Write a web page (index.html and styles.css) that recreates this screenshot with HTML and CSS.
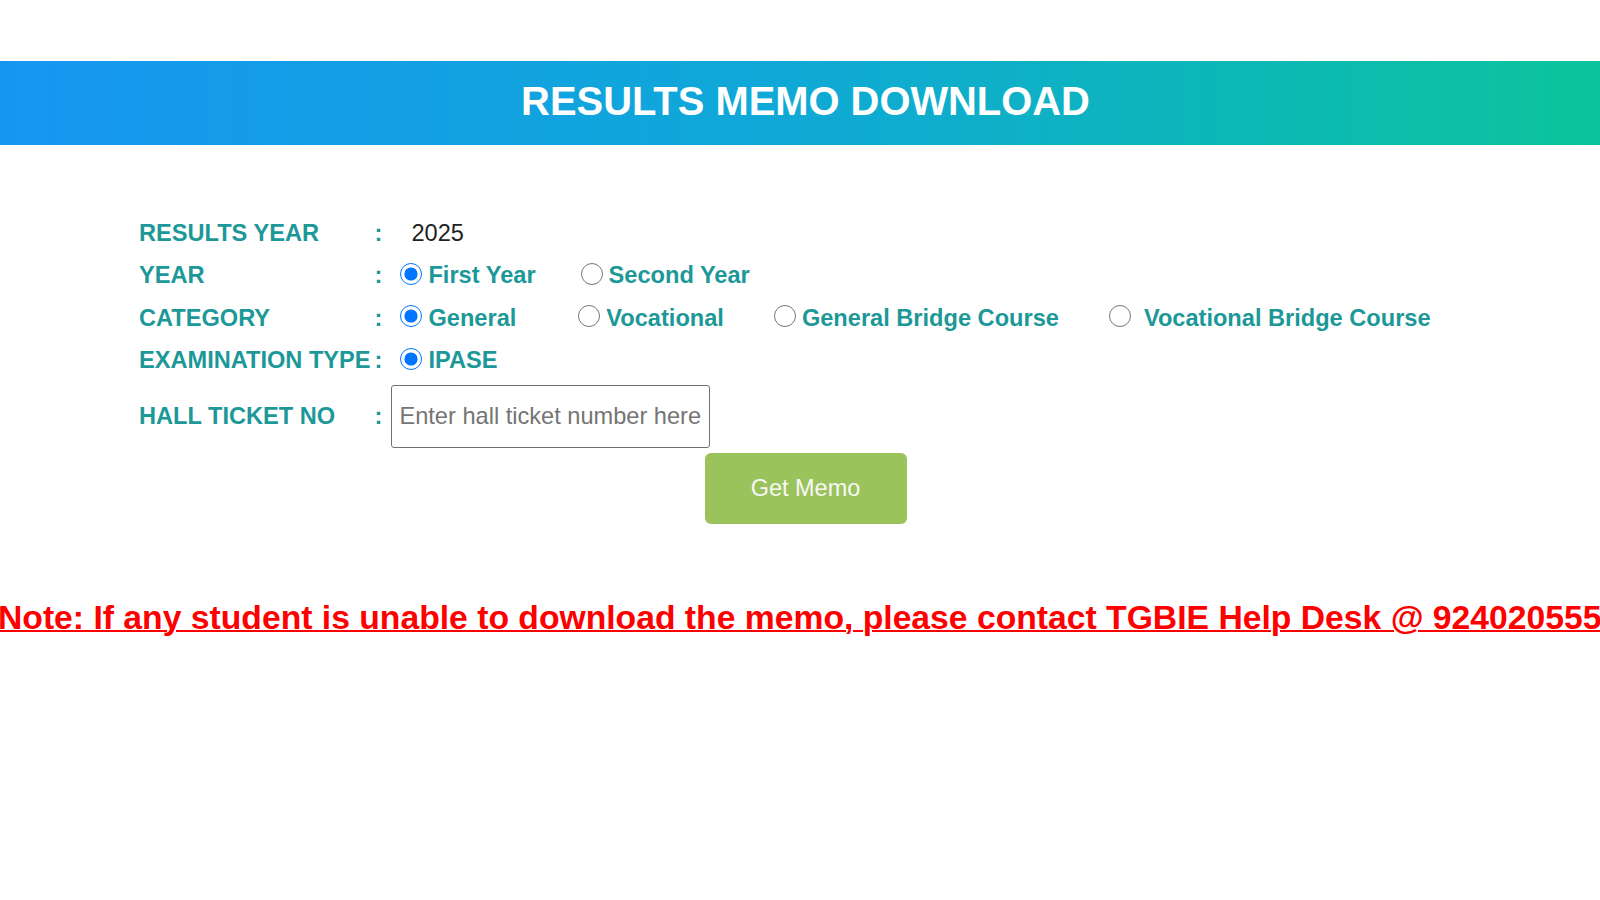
FILE: index.html
```html
<!DOCTYPE html>
<html lang="en">
<head>
<meta charset="utf-8">
<title>Results Memo Download</title>
<link rel="stylesheet" href="styles.css">
</head>
<body>
  <header class="banner">
    <h1 class="banner-title">RESULTS MEMO DOWNLOAD</h1>
  </header>

  <form class="memo-form" onsubmit="return false;">
    <div class="form-grid">
      <div class="label">RESULTS YEAR</div>
      <div class="colon">:</div>
      <div class="value"><span class="year-value">2025</span></div>

      <div class="label">YEAR</div>
      <div class="colon">:</div>
      <div class="value">
        <label class="opt"><input type="radio" name="year" checked><span>First Year</span></label>
        <label class="opt gap-year"><input type="radio" name="year"><span>Second Year</span></label>
      </div>

      <div class="label">CATEGORY</div>
      <div class="colon">:</div>
      <div class="value">
        <label class="opt"><input type="radio" name="cat" checked><span>General</span></label>
        <label class="opt gap-voc"><input type="radio" name="cat"><span>Vocational</span></label>
        <label class="opt gap-gbc"><input type="radio" name="cat"><span>General Bridge Course</span></label>
        <label class="opt gap-vbc wide"><input type="radio" name="cat"><span>Vocational Bridge Course</span></label>
      </div>

      <div class="label">EXAMINATION TYPE</div>
      <div class="colon">:</div>
      <div class="value">
        <label class="opt"><input type="radio" name="exam" checked><span>IPASE</span></label>
      </div>

      <div class="label label-tall">HALL TICKET NO</div>
      <div class="colon label-tall">:</div>
      <div class="value value-tall">
        <input class="ticket" type="text" placeholder="Enter hall ticket number here">
      </div>
    </div>

    <div class="actions">
      <button class="get-memo" type="submit">Get Memo</button>
    </div>
  </form>

  <div class="note">
    <span class="note-text">Note: If any student is unable to download the memo, please contact TGBIE Help Desk @ 9240205555</span>
  </div>
</body>
</html>
```

FILE: styles.css
```css
* {
  box-sizing: border-box;
}

html, body {
  margin: 0;
  padding: 0;
  background: #ffffff;
}

body {
  font-family: "Liberation Sans", Arial, sans-serif;
  padding-top: 61px;
  overflow: hidden;
}

.banner {
  height: 84px;
  background: linear-gradient(90deg, #1696f1 0%, #0fa9d6 50%, #0bc49c 100%);
  display: flex;
  align-items: center;
  justify-content: center;
  padding-left: 11px;
  padding-bottom: 3px;
}

.banner-title {
  margin: 0;
  color: #ffffff;
  font-size: 39.9px;
  font-weight: bold;
  line-height: 1.15;
}

.memo-form {
  margin: 0;
}

.form-grid {
  display: grid;
  grid-template-columns: auto auto 1fr;
  grid-template-rows: 42.5px 42.5px 42.5px 42.5px 66px;
  margin-top: 67px;
  margin-left: 139px;
  font-size: 23.6px;
  color: #1c9898;
}

.label,
.colon {
  font-weight: bold;
  display: flex;
  align-items: center;
}

.colon {
  padding-left: 4px;
  padding-right: 9px;
}

.value {
  display: flex;
  align-items: center;
  font-weight: bold;
}

.year-value {
  padding-left: 20px;
  color: #222222;
  font-weight: normal;
}

.opt {
  display: inline-flex;
  align-items: center;
  gap: 6px;
  margin-left: 9px;
}

.opt input[type="radio"] {
  width: 22px;
  height: 22px;
  margin: 0 0 4px 0;
}

.opt.gap-year {
  margin-left: 45px;
}

.opt.gap-voc {
  margin-left: 62px;
}

.opt.gap-gbc {
  margin-left: 50px;
}

.opt.gap-vbc {
  margin-left: 50px;
}

.opt.wide {
  gap: 13px;
}

.label-tall {
  margin-top: 3px;
}

.form-grid > .label-tall,
.form-grid > .value-tall {
  height: 63px;
}

.value-tall {
  margin-top: 3px;
}

.ticket {
  width: 319px;
  height: 63px;
  border: 1px solid #707070;
  border-radius: 3px;
  padding: 0 0 0 7px;
  font-family: "Liberation Sans", Arial, sans-serif;
  font-size: 23.6px;
  color: #333333;
  background: #ffffff;
  outline: none;
}

.ticket::placeholder {
  color: #757575;
}

.actions {
  display: flex;
  justify-content: center;
  padding-left: 11px;
  margin-top: 5px;
}

.get-memo {
  width: 202px;
  height: 71px;
  border: none;
  border-radius: 6px;
  background: #9bc35b;
  color: #f7f7f7;
  font-family: "Liberation Sans", Arial, sans-serif;
  font-size: 23.5px;
  cursor: pointer;
}

.note {
  margin-top: 74px;
  white-space: nowrap;
  overflow: hidden;
  line-height: 38px;
}

.note-text {
  display: inline-block;
  margin-left: -2px;
  color: #ff0000;
  font-weight: bold;
  font-size: 33.7px;
  text-decoration: underline;
  text-decoration-thickness: 2px;
}
```
